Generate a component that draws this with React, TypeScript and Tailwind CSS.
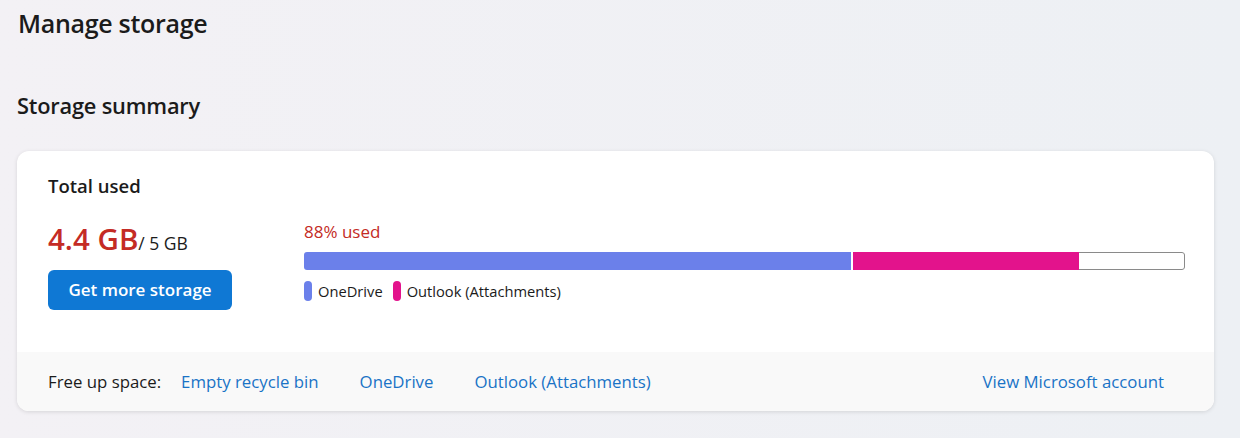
const used = 4.4;
const total = 5;
const segments = [
    { label: "OneDrive", color: "bg-[#6b80ea]", pct: 62.1 },
    { label: "Outlook (Attachments)", color: "bg-[#e3138c]", pct: 25.9 },
];
const freeUpLinks = ["Empty recycle bin", "OneDrive", "Outlook (Attachments)"];

export default function App() {
    return (
        <div
            className="w-[1240px] h-[438px] overflow-hidden bg-gradient-to-r from-[#f3f1f5] to-[#edf0f4] text-[#1b1b1b]"
            style={{ fontFamily: '"Open Sans", "Noto Sans", sans-serif' }}
        >
            <h1 className="pl-[18px] pt-[5px] text-[25px] leading-[36px] font-semibold tracking-[-0.3px]">
                Manage storage
            </h1>

            <h2 className="pl-[17px] mt-[49px] text-[21.8px] leading-[32px] font-semibold tracking-[-0.2px]">
                Storage summary
            </h2>

            <section className="ml-[17px] mt-[29px] w-[1197px] rounded-xl bg-white shadow-[0_1px_4px_rgba(0,0,0,0.12)] overflow-hidden">
                <div className="px-[31px] pt-[22px] pb-[42px]">
                    <h3 className="text-[18.5px] leading-[26px] font-semibold">Total used</h3>

                    <div className="flex mt-[20px]">
                        {/* Left */}
                        <div className="w-[256px] shrink-0">
                            <div className="flex items-baseline">
                                <span className="text-[29.5px] leading-[40px] font-semibold text-[#c42b25]">
                                    {used} GB
                                </span>
                                <span className="text-[17.5px] text-[#1b1b1b]">/ {total} GB</span>
                            </div>
                            <button className="mt-[11px] w-[184px] h-[40px] rounded-md bg-[#0f78d4] text-white text-[17px] font-semibold">
                                Get more storage
                            </button>
                        </div>

                        {/* Right */}
                        <div className="flex-1">
                            <div className="text-[17px] leading-[24px] text-[#c42b25] mt-[1px]">
                                88% used
                            </div>
                            <div className="mt-[8px] w-[881px] h-[18px] flex rounded-[3px] overflow-hidden bg-white">
                                {segments.map((s, i) => (
                                    <div
                                        key={i}
                                        className={`${s.color} h-full ${i > 0 ? "border-l-2 border-white" : ""}`}
                                        style={{ width: `${s.pct}%` }}
                                    />
                                ))}
                                <div className="flex-1 h-full border border-l-0 border-[#8a8a8a] rounded-r-[3px]" />
                            </div>
                            <div className="flex items-center gap-[10px] mt-[10px] text-[14.7px]">
                                {segments.map((s, i) => (
                                    <div key={i} className="flex items-center gap-[6px]">
                                        <span className={`${s.color} w-[8px] h-[20px] rounded-full`} />
                                        <span>{s.label}</span>
                                    </div>
                                ))}
                            </div>
                        </div>
                    </div>
                </div>

                <div className="h-[59px] bg-[#f9f9f9] flex items-center px-[31px] text-[16.8px]">
                    <span className="mr-[20px]">Free up space:</span>
                    {freeUpLinks.map((link) => (
                        <a key={link} className="text-[#1a73c6] mr-[41px] cursor-pointer">
                            {link}
                        </a>
                    ))}
                    <a className="ml-auto mr-[19px] text-[#1a73c6] cursor-pointer">View Microsoft account</a>
                </div>
            </section>
        </div>
    );
}
